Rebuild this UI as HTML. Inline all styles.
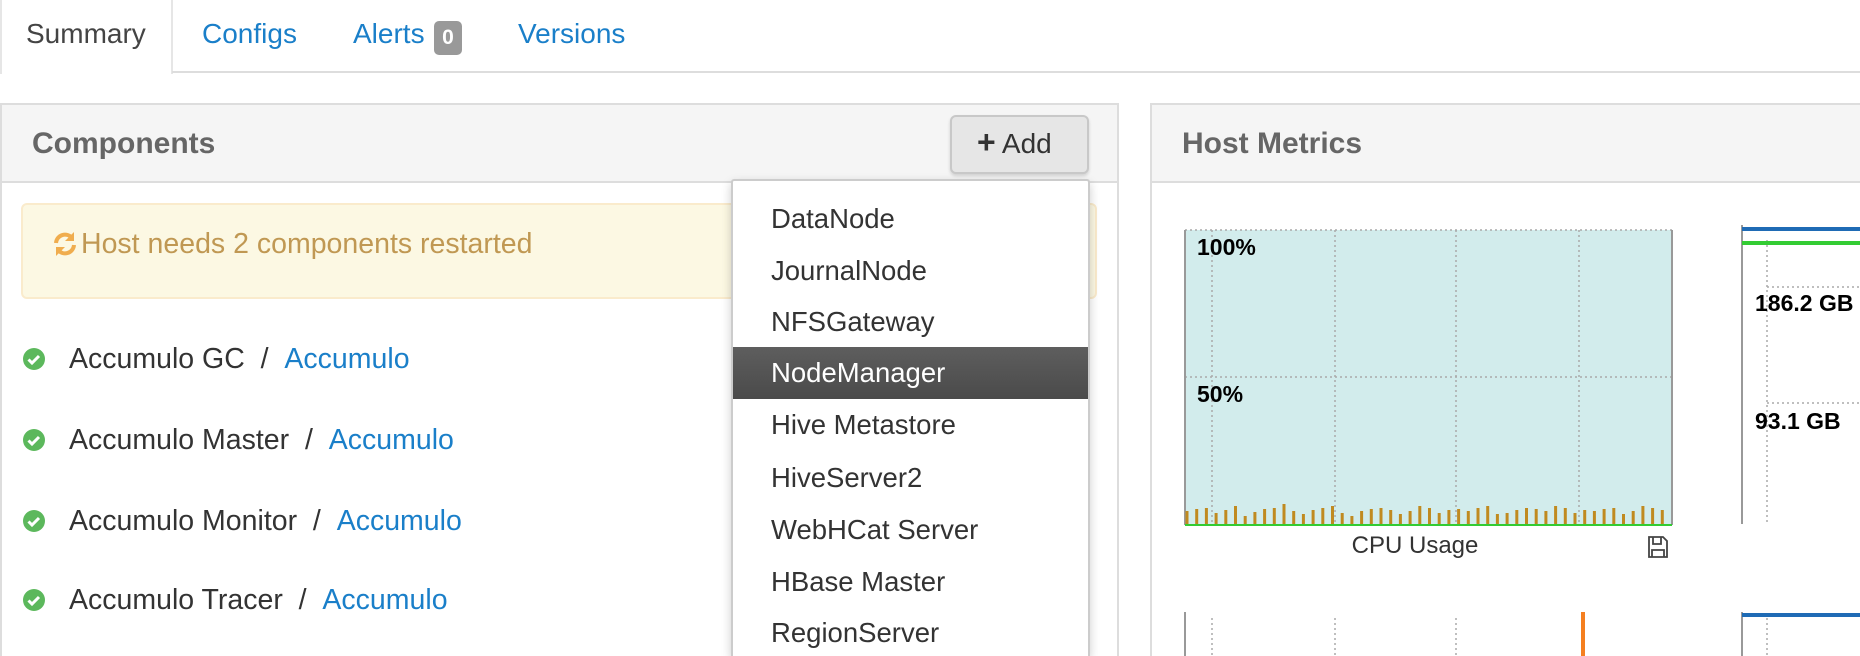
<!DOCTYPE html>
<html><head><meta charset="utf-8">
<style>
*{box-sizing:border-box;margin:0;padding:0}
html,body{width:1860px;height:656px;overflow:hidden}
body{background:#fff;font-family:"Liberation Sans",Arial,sans-serif;position:relative;color:#333}
.a{position:absolute;white-space:nowrap}
.tab{font-size:28px;top:18px}
.link{color:#1a7fc9}
.item{position:absolute;left:38px;font-size:27.5px;color:#333}
.row{font-size:28.5px}
</style></head><body>
<!-- tabs -->
<div class="a" style="left:0;top:0;width:173px;height:74px;border:2px solid #e6e6e6;border-bottom:none;border-top:none;background:#fff"></div>
<div class="a" style="left:172px;top:71px;width:1688px;height:2px;background:#ddd"></div>
<div class="a tab" style="left:26px;color:#444">Summary</div>
<div class="a tab link" style="left:202px">Configs</div>
<div class="a tab link" style="left:353px">Alerts</div>
<div class="a" style="left:434px;top:21px;width:28px;height:34px;background:#999;border-radius:5px;color:#fff;font-size:21px;font-weight:bold;text-align:center;line-height:34px">0</div>
<div class="a tab link" style="left:518px">Versions</div>

<!-- left panel -->
<div class="a" style="left:0;top:103px;width:1119px;height:553px;border:2px solid #ddd;border-bottom:none"></div>
<div class="a" style="left:2px;top:105px;width:1115px;height:78px;background:#f5f5f5;border-bottom:2px solid #ddd"></div>
<div class="a" style="left:32px;top:127px;font-size:30px;font-weight:bold;color:#666">Components</div>
<div class="a" style="left:950px;top:115px;width:139px;height:59px;background:#e6e6e6;border:2px solid #c8c8c8;border-radius:6px;box-shadow:0 2px 3px rgba(0,0,0,.15)"></div>
<div class="a" style="left:977px;top:128px;font-size:28px;color:#333"><b style="font-size:32px;line-height:28px">+</b> Add</div>

<div class="a" style="left:21px;top:203px;width:1076px;height:96px;background:#fcf8e3;border:2px solid #faebcc;border-radius:6px"></div>
<svg class="a" style="left:52px;top:230px" width="26" height="28" viewBox="0 0 26 28"><path d="M4 13a9 9 0 0 1 16-5" fill="none" stroke="#f0ad4e" stroke-width="4"/><path d="M22 2v9h-9z" fill="#f0ad4e"/><path d="M22 15a9 9 0 0 1-16 5" fill="none" stroke="#f0ad4e" stroke-width="4"/><path d="M4 26v-9h9z" fill="#f0ad4e"/></svg>
<div class="a" style="left:81px;top:228px;font-size:28.5px;color:#c09853">Host needs 2 components restarted</div>

<svg class="a" style="left:23px;top:348px" width="22" height="22"><circle cx="11" cy="11" r="11" fill="#5cb85c"/><path d="M5.5 11.5l3.5 3.5 7-7" fill="none" stroke="#fff" stroke-width="3"/></svg>
<div class="a row" style="left:69px;top:343px">Accumulo GC &nbsp;/ &nbsp;<span class="link">Accumulo</span></div>
<svg class="a" style="left:23px;top:429px" width="22" height="22"><circle cx="11" cy="11" r="11" fill="#5cb85c"/><path d="M5.5 11.5l3.5 3.5 7-7" fill="none" stroke="#fff" stroke-width="3"/></svg>
<div class="a row" style="left:69px;top:424px">Accumulo Master &nbsp;/ &nbsp;<span class="link">Accumulo</span></div>
<svg class="a" style="left:23px;top:510px" width="22" height="22"><circle cx="11" cy="11" r="11" fill="#5cb85c"/><path d="M5.5 11.5l3.5 3.5 7-7" fill="none" stroke="#fff" stroke-width="3"/></svg>
<div class="a row" style="left:69px;top:505px">Accumulo Monitor &nbsp;/ &nbsp;<span class="link">Accumulo</span></div>
<svg class="a" style="left:23px;top:589px" width="22" height="22"><circle cx="11" cy="11" r="11" fill="#5cb85c"/><path d="M5.5 11.5l3.5 3.5 7-7" fill="none" stroke="#fff" stroke-width="3"/></svg>
<div class="a row" style="left:69px;top:584px">Accumulo Tracer &nbsp;/ &nbsp;<span class="link">Accumulo</span></div>

<!-- dropdown -->
<div class="a" style="left:731px;top:179px;width:359px;height:477px;background:#fff;border:2px solid #ccc;border-bottom:none;border-radius:3px 3px 0 0;box-shadow:0 4px 10px rgba(0,0,0,.2)">
 <div class="a" style="left:0;top:166px;width:355px;height:52px;background:linear-gradient(#5e5e5e,#4a4a4a)"></div>
 <div class="item" style="top:22px">DataNode</div>
 <div class="item" style="top:74px">JournalNode</div>
 <div class="item" style="top:125px">NFSGateway</div>
 <div class="item" style="top:176px;color:#fff">NodeManager</div>
 <div class="item" style="top:228px">Hive Metastore</div>
 <div class="item" style="top:281px">HiveServer2</div>
 <div class="item" style="top:333px">WebHCat Server</div>
 <div class="item" style="top:385px">HBase Master</div>
 <div class="item" style="top:436px">RegionServer</div>
</div>

<!-- right panel -->
<div class="a" style="left:1150px;top:103px;width:710px;height:553px;border:2px solid #ddd;border-bottom:none;border-right:none"></div>
<div class="a" style="left:1152px;top:105px;width:708px;height:78px;background:#f5f5f5;border-bottom:2px solid #ddd"></div>
<div class="a" style="left:1182px;top:127px;font-size:30px;font-weight:bold;color:#666">Host Metrics</div>

<svg class="a" style="left:1180px;top:220px" width="680" height="436">
 <rect x="5" y="10" width="487" height="295" fill="#d2ecec"/>
 <g stroke="#aaa" stroke-width="1.5" stroke-dasharray="2,3">
  <line x1="5" y1="10" x2="492" y2="10"/><line x1="5" y1="157" x2="492" y2="157"/>
  <line x1="32" y1="10" x2="32" y2="305"/><line x1="155" y1="10" x2="155" y2="305"/><line x1="276" y1="10" x2="276" y2="305"/><line x1="399" y1="10" x2="399" y2="305"/>
  <line x1="587" y1="67" x2="680" y2="67"/><line x1="587" y1="183" x2="680" y2="183"/><line x1="587" y1="20" x2="587" y2="303"/>
  <line x1="32" y1="398" x2="32" y2="436"/><line x1="155" y1="398" x2="155" y2="436"/><line x1="276" y1="398" x2="276" y2="436"/><line x1="587" y1="398" x2="587" y2="436"/>
 </g>
 <path d="M5 10V305M492 10V305" stroke="#999" stroke-width="2"/>
 <path id="bars" d="" stroke="#c08a20" stroke-width="3"/>
 <line x1="5" y1="305" x2="492" y2="305" stroke="#3c3" stroke-width="2"/>
 <text x="17" y="35" font-size="23" font-weight="bold" font-family="Liberation Sans,Arial,sans-serif">100%</text>
 <text x="17" y="182" font-size="23" font-weight="bold" font-family="Liberation Sans,Arial,sans-serif">50%</text>
 <text x="235" y="333" font-size="24" text-anchor="middle" fill="#333" font-family="Liberation Sans,Arial,sans-serif">CPU Usage</text>
 <g fill="none" stroke="#444" stroke-width="1.8"><path d="M469 317h14l4 4v16h-18z"/><path d="M473 317v7h8v-7M472 337v-7h12v7"/></g>
 <path d="M562 5V304" stroke="#999" stroke-width="2"/>
 <line x1="562" y1="9" x2="680" y2="9" stroke="#1f6bb5" stroke-width="4"/>
 <line x1="562" y1="23" x2="680" y2="23" stroke="#3c3" stroke-width="4"/>
 <text x="575" y="91" font-size="23" font-weight="bold" font-family="Liberation Sans,Arial,sans-serif">186.2 GB</text>
 <text x="575" y="209" font-size="23" font-weight="bold" font-family="Liberation Sans,Arial,sans-serif">93.1 GB</text>
 <path d="M5 392V436M562 392V436" stroke="#999" stroke-width="2"/>
 <line x1="403" y1="392" x2="403" y2="436" stroke="#f57f20" stroke-width="4"/>
 <line x1="562" y1="395" x2="680" y2="395" stroke="#1f6bb5" stroke-width="4"/>
</svg>
<script>
var d="",h=[14,16,17,12,15,19,9,13,16,17,21,14,11,15,17,19,12,9,14,16,17,15,11,14,19,17,12,15,16,14,17,19,11,12,15,17,16,14,19,17,12,15,14,16,17,11,14,19,17,15];
for(var i=0;i<h.length;i++){var x=7+i*9.7;d+="M"+x.toFixed(1)+" 305v-"+h[i];}
document.getElementById("bars").setAttribute("d",d);
</script>
</body></html>
